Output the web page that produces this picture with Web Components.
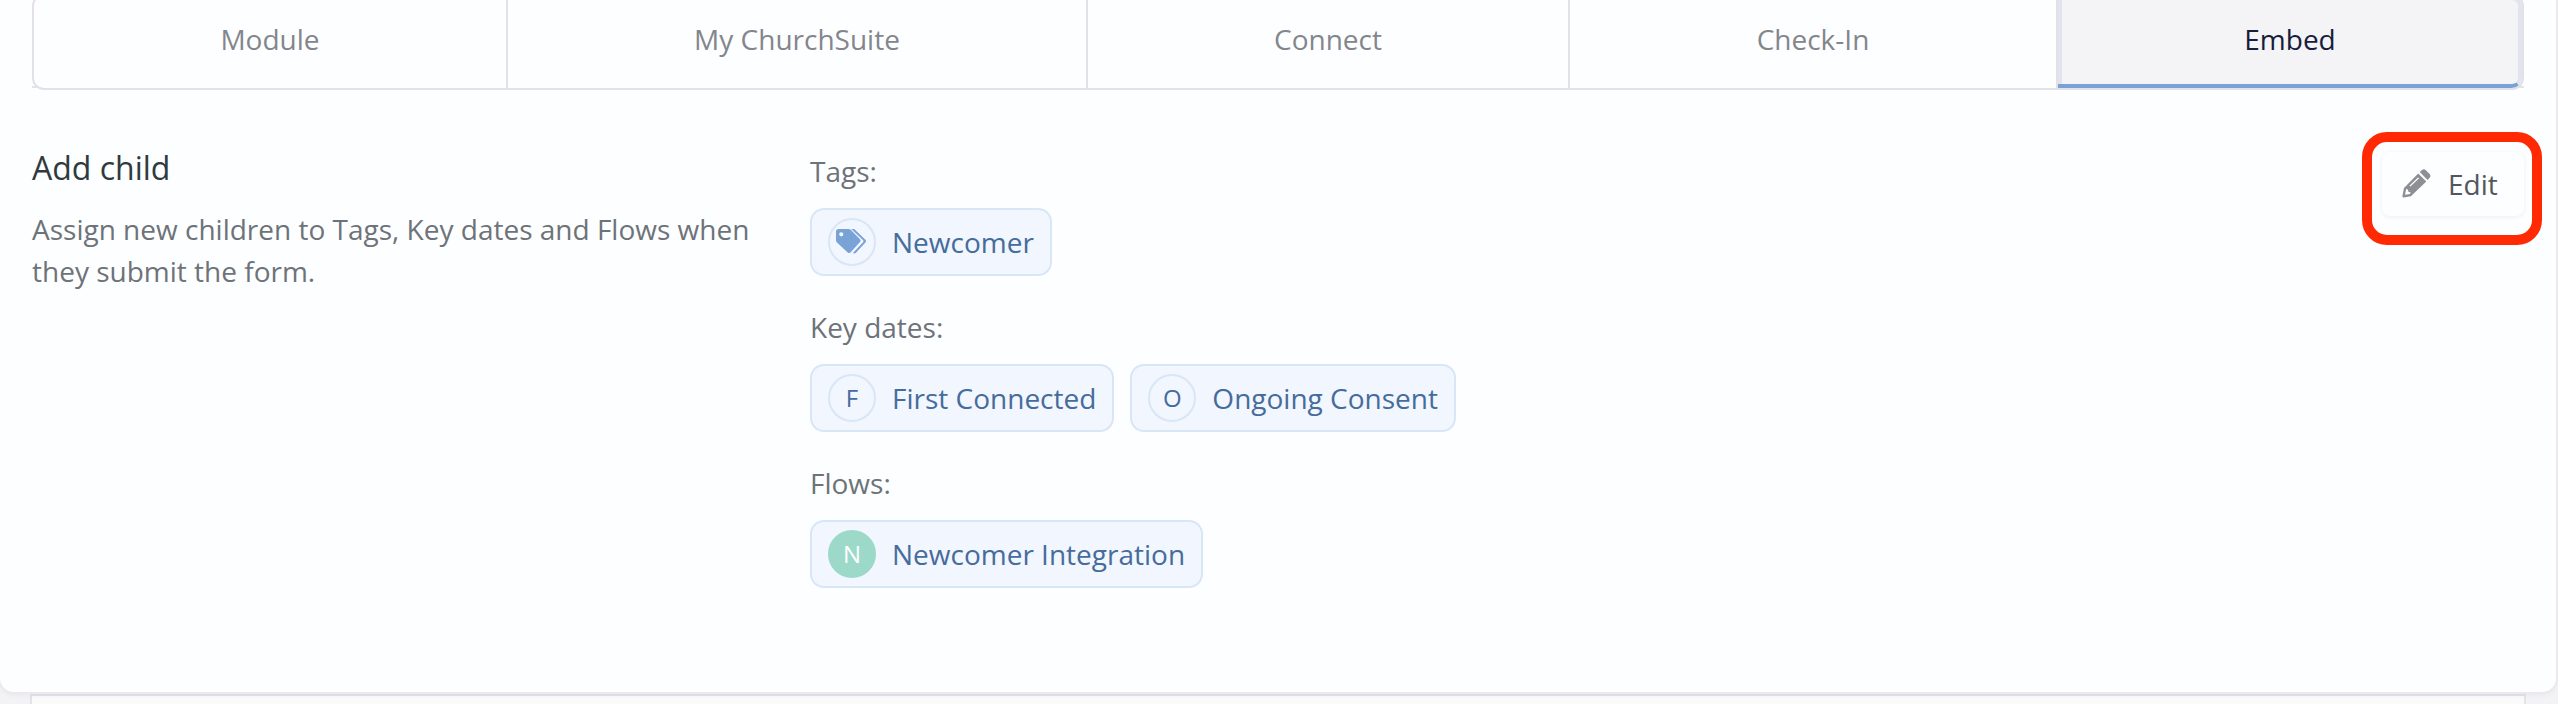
<!DOCTYPE html>
<html lang="en">
<head>
<meta charset="utf-8">
<title>Embed settings</title>
<style>
    body {
        margin: 0;
        height: 704px;
        overflow: hidden;
        background: #f3f3f5;
        font-family: "Open Sans", "Noto Sans", sans-serif;
        font-size: 28px;
        line-height: 42px;
        color: #6d7378;
    }
</style>
</head>
<body>
    <settings-card>
        <tab-bar slot="tabs">
            <tab-item style="width: 474px">Module</tab-item>
            <tab-item style="width: 580px">My ChurchSuite</tab-item>
            <tab-item style="width: 482px">Connect</tab-item>
            <tab-item style="width: 488px">Check-In</tab-item>
            <tab-item active>Embed</tab-item>
        </tab-bar>
        <settings-row>
            <span slot="title">Add child</span>
            <span slot="help">Assign new children to Tags, Key dates and Flows when they submit the form.</span>
            <pill-group label="Tags:">
                <info-pill icon="tags">Newcomer</info-pill>
            </pill-group>
            <pill-group label="Key dates:">
                <info-pill letter="F">First Connected</info-pill>
                <info-pill letter="O">Ongoing Consent</info-pill>
            </pill-group>
            <pill-group label="Flows:">
                <info-pill letter="N" filled>Newcomer Integration</info-pill>
            </pill-group>
            <edit-button slot="action">Edit</edit-button>
        </settings-row>
    </settings-card>
    <next-panel></next-panel>

<script>
class SettingsCard extends HTMLElement {
    constructor() {
        super();
        this.attachShadow({mode:'open'});
        this.shadowRoot.innerHTML = `
            <style>
                :host {
                    display: flow-root;
                    position: relative;
                    z-index: 1;
                    box-sizing: border-box;
                    width: 2556px;
                    height: 692px;
                    padding: 0 32px;
                    background: #fdfeff;
                    border-radius: 0 0 14px 14px;
                    box-shadow: 0 0 0 2px #ece8ee, 0 2px 6px rgba(60,50,90,0.08);
                }
            </style>
            <slot name="tabs"></slot>
            <slot></slot>
        `;
    }
}

class TabBar extends HTMLElement {
    constructor() {
        super();
        this.attachShadow({mode:'open'});
        this.shadowRoot.innerHTML = `
            <style>
                :host {
                    display: block;
                    height: 96px;
                    margin-top: -6px;
                    /* rule running behind the rounded corners */
                    background: linear-gradient(#e5e2e7, #e5e2e7) 0 92px / 100% 2px no-repeat;
                }
                nav {
                    display: flex;
                    box-sizing: border-box;
                    height: 96px;
                    border: 2px solid #e3e1e6;
                    border-radius: 12px;
                    background: #fdfeff;
                }
            </style>
            <nav><slot></slot></nav>
        `;
    }
}

class TabItem extends HTMLElement {
    constructor() {
        super();
        this.attachShadow({mode:'open'});
        this.shadowRoot.innerHTML = `
            <style>
                :host {
                    display: block;
                    box-sizing: border-box;
                    padding-top: 22px;
                    border-right: 2px solid #e3e1e6;
                    text-align: center;
                    color: #84868c;
                }
                :host([active]) {
                    flex: 1;
                    padding: 18px 0 0 4px;
                    border: 4px solid #e1e4ef;
                    border-left: 0;
                    border-bottom-color: #79a3d6;
                    border-radius: 0 10px 10px 0;
                    background: #f4f3f6;
                    box-shadow: inset 4px 0 #e1e4ef;
                    color: #171d3a;
                }
            </style>
            <slot></slot>
        `;
    }
}

class SettingsRow extends HTMLElement {
    constructor() {
        super();
        this.attachShadow({mode:'open'});
        this.shadowRoot.innerHTML = `
            <style>
                :host {
                    display: grid;
                    grid-template-columns: 730px 1fr auto;
                    column-gap: 48px;
                    padding-top: 60px;
                    align-items: start;
                }
                h2 {
                    margin: -4px 0 18px;
                    font-size: 32px;
                    line-height: 44px;
                    font-weight: 400;
                    color: #2f3a40;
                }
                p {
                    margin: 0;
                }
                #groups {
                    display: grid;
                    row-gap: 30px;
                }
            </style>
            <section>
                <h2><slot name="title"></slot></h2>
                <p><slot name="help"></slot></p>
            </section>
            <div id="groups"><slot></slot></div>
            <slot name="action"></slot>
        `;
    }
}

class PillGroup extends HTMLElement {
    constructor() {
        super();
        this.attachShadow({mode:'open'});
        this.shadowRoot.innerHTML = `
            <style>
                :host {
                    display: block;
                }
                #label {
                    margin-bottom: 16px;
                }
                #pills {
                    display: flex;
                    gap: 16px;
                }
            </style>
            <div id="label">${this.getAttribute('label')}</div>
            <div id="pills"><slot></slot></div>
        `;
    }
}

const tagsIcon = `
    <svg width="30" height="25" viewBox="0 0 30 25">
        <path fill="#79a3d6" fill-rule="evenodd" d="M2.5 0H12.8Q13.9 0 14.7 .8L24 10.2Q25.3 11.6 24 13L14.7 23.3Q13.2 24.8 11.7 23.4L1 13.4Q0 12.4 0 11.2V2.5Q0 0 2.5 0ZM5.3 3.2A2.1 2.1 0 1 0 5.3 7.4A2.1 2.1 0 1 0 5.3 3.2Z"/>
        <path fill="#79a3d6" d="M15.3 0H18.2L29.4 10.7Q30.7 12.1 29.4 13.5L19.5 24.3H16.7L27 13.2Q28 12.1 26.9 11Z"/>
    </svg>`;

class InfoPill extends HTMLElement {
    constructor() {
        super();
        this.attachShadow({mode:'open'});
        const isTag = this.getAttribute('icon') === 'tags';
        this.shadowRoot.innerHTML = `
            <style>
                :host {
                    display: flex;
                    align-items: center;
                    box-sizing: border-box;
                    height: 68px;
                    padding: 0 16px;
                    gap: 16px;
                    border: 2px solid #d9e6f5;
                    border-radius: 14px;
                    background: #f2f6fe;
                    color: #466c9c;
                    white-space: nowrap;
                }
                #avatar {
                    display: flex;
                    align-items: center;
                    justify-content: center;
                    box-sizing: border-box;
                    width: 48px;
                    height: 48px;
                    border: 2px solid #d9e6f5;
                    border-radius: 50%;
                    font-size: 24px;
                    line-height: 44px;
                }
                :host([filled]) #avatar {
                    border-color: #9dd9c8;
                    background: #9dd9c8;
                    color: #fff;
                }
                svg {
                    margin: 0 2px 2px 0;
                }
            </style>
            <div id="avatar">${isTag ? tagsIcon : this.getAttribute('letter')}</div>
            <slot></slot>
        `;
    }
}

class EditButton extends HTMLElement {
    constructor() {
        super();
        this.attachShadow({mode:'open'});
        this.shadowRoot.innerHTML = `
            <style>
                :host {
                    display: block;
                    position: relative;
                    width: 142px;
                }
                button {
                    display: flex;
                    align-items: center;
                    width: 142px;
                    height: 64px;
                    margin: 2px 0 0;
                    padding: 0 0 1px 20px;
                    gap: 17px;
                    border: 0;
                    border-radius: 8px;
                    background: #fdfeff;
                    box-shadow: 0 1px 4px rgba(40,50,90,0.08);
                    font: inherit;
                    color: #50585e;
                }
                /* callout ring around the button */
                #ring {
                    position: absolute;
                    top: -18px;
                    left: -20px;
                    box-sizing: border-box;
                    width: 180px;
                    height: 113px;
                    border: 10px solid #ff2a04;
                    border-radius: 25px;
                    pointer-events: none;
                }
            </style>
            <button>
                <svg width="29" height="29" viewBox="0 0 29 29">
                    <path fill="#8c8f94" fill-rule="evenodd" d="M16.2 4.4L24.3 12.5L8.9 27.3L1.6 28.4Q.1 28.5 .4 27L2 19ZM4.2 20.1L3 25.8L8 25.1L8.7 23.6L6.4 22.8L5.9 20.5ZM8.4 17.5L17.1 9.3L16 8.4L7.4 16.8Z"/>
                    <path fill="#8c8f94" d="M17.8 2.9L20 .9Q21.8-.5 23.6 1L27.6 5Q29.2 6.8 27.8 8.6L25.5 11Z"/>
                </svg>
                <slot></slot>
            </button>
            <div id="ring"></div>
        `;
    }
}

class NextPanel extends HTMLElement {
    constructor() {
        super();
        this.attachShadow({mode:'open'});
        this.shadowRoot.innerHTML = `
            <style>
                :host {
                    display: block;
                    box-sizing: border-box;
                    width: 2496px;
                    height: 40px;
                    margin: 2px 0 0 30px;
                    border: 2px solid #e3e2e9;
                    background: #fafafa;
                }
            </style>
        `;
    }
}

customElements.define('settings-card', SettingsCard);
customElements.define('tab-bar', TabBar);
customElements.define('tab-item', TabItem);
customElements.define('settings-row', SettingsRow);
customElements.define('pill-group', PillGroup);
customElements.define('info-pill', InfoPill);
customElements.define('edit-button', EditButton);
customElements.define('next-panel', NextPanel);
</script>
</body>
</html>
